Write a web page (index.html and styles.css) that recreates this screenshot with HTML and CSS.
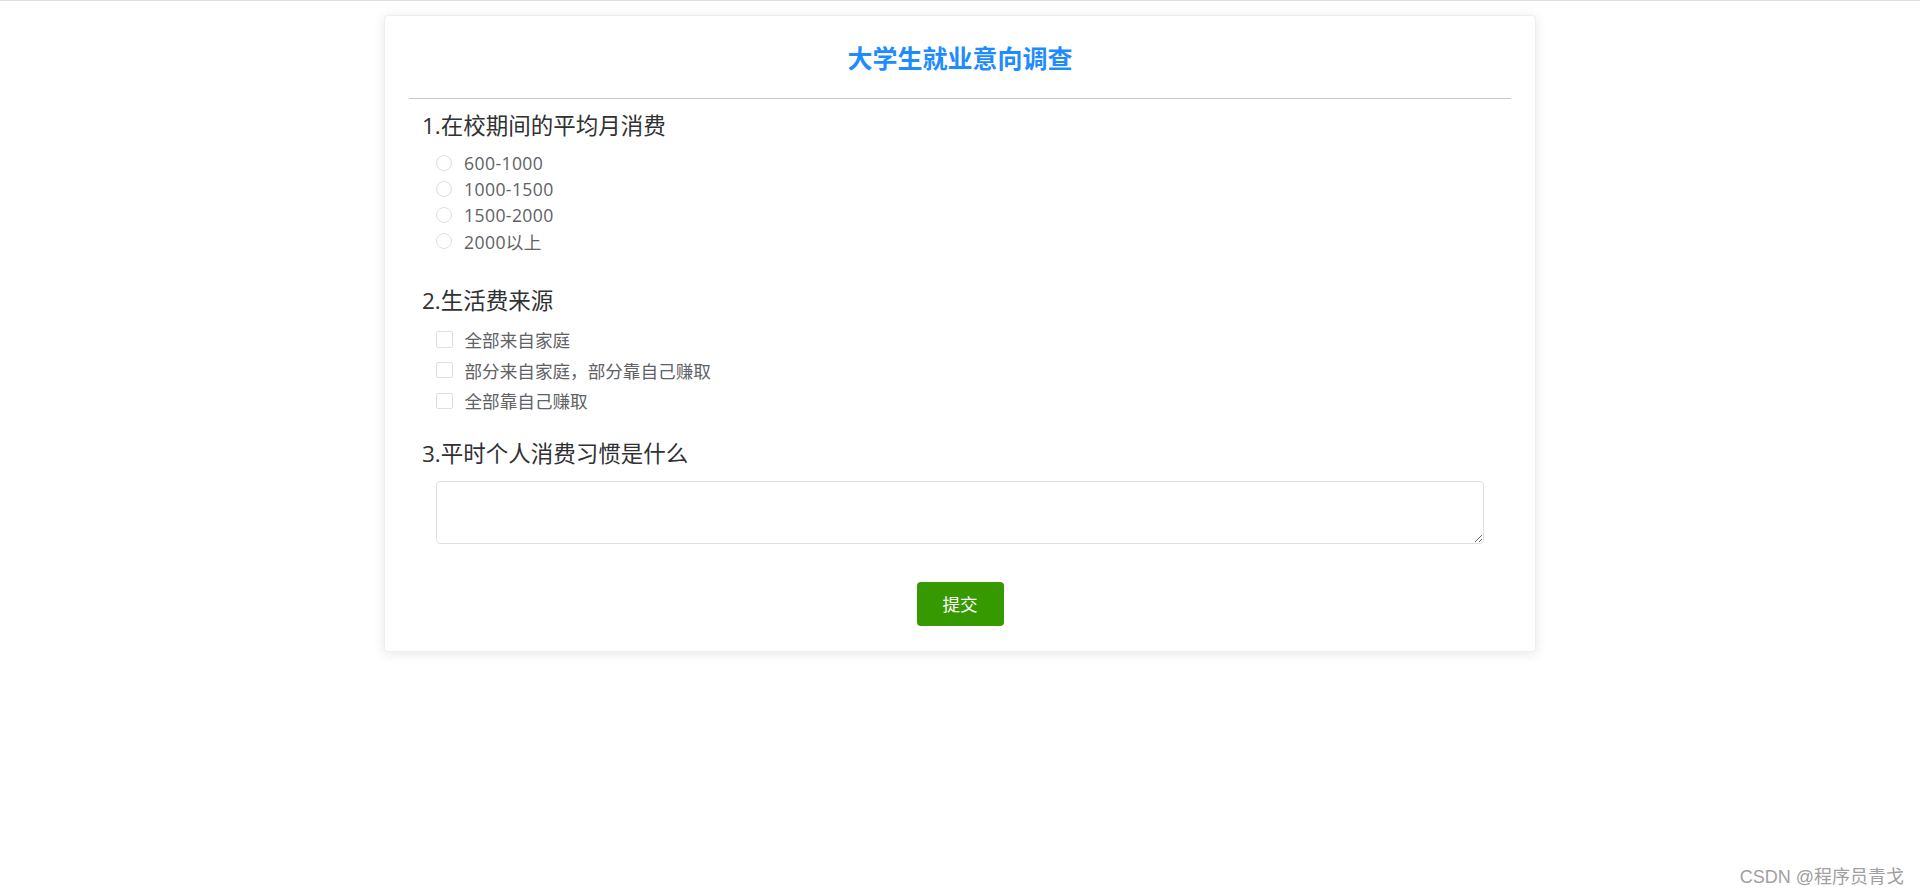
FILE: index.html
```html
<!DOCTYPE html>
<html lang="zh-CN">
<head>
<meta charset="utf-8">
<title>大学生就业意向调查</title>
<link rel="stylesheet" href="styles.css">
</head>
<body>
<div class="topline"></div>
<div class="card">
  <div class="card-header">
    <h2 class="title">大学生就业意向调查</h2>
  </div>
  <div class="question q1">
    <div class="q-title">1.在校期间的平均月消费</div>
    <div class="options">
      <label class="opt radio-opt"><input type="radio" name="q1" class="radio"><span class="opt-text">600-1000</span></label>
      <label class="opt radio-opt"><input type="radio" name="q1" class="radio"><span class="opt-text">1000-1500</span></label>
      <label class="opt radio-opt"><input type="radio" name="q1" class="radio"><span class="opt-text">1500-2000</span></label>
      <label class="opt radio-opt"><input type="radio" name="q1" class="radio"><span class="opt-text">2000以上</span></label>
    </div>
  </div>
  <div class="question q2">
    <div class="q-title">2.生活费来源</div>
    <div class="options">
      <label class="opt check-opt"><input type="checkbox" class="check"><span class="opt-text">全部来自家庭</span></label>
      <label class="opt check-opt"><input type="checkbox" class="check"><span class="opt-text">部分来自家庭，部分靠自己赚取</span></label>
      <label class="opt check-opt"><input type="checkbox" class="check"><span class="opt-text">全部靠自己赚取</span></label>
    </div>
  </div>
  <div class="question q3">
    <div class="q-title">3.平时个人消费习惯是什么</div>
    <div class="options">
      <textarea class="answer"></textarea>
    </div>
  </div>
  <div class="actions">
    <button class="submit" type="button">提交</button>
  </div>
</div>
<div class="watermark">CSDN @程序员青戈</div>
</body>
</html>
```

FILE: styles.css
```css
html, body {
  margin: 0;
  padding: 0;
  background: #ffffff;
}

body {
  font-family: "Open Sans", "Noto Sans CJK SC", sans-serif;
  color: #303133;
  height: 895px;
  position: relative;
  overflow: hidden;
}

.topline {
  height: 0;
  border-top: 1px solid #dedede;
}

.card {
  width: 60%;
  box-sizing: border-box;
  margin: 14px auto 0;
  padding: 23px 24px 25px;
  border: 1px solid #ebeef5;
  border-radius: 4px;
  background: #fff;
  box-shadow: 0 2px 12px 0 rgba(0, 0, 0, 0.1);
}

.card-header {
  padding-bottom: 23px;
  border-bottom: 1px solid #c8c8c8;
}

.title {
  margin: 0;
  text-align: center;
  font-family: "Noto Sans CJK SC", sans-serif;
  font-size: 25px;
  line-height: 36px;
  font-weight: 700;
  color: #1e8cff;
}

.question {
  padding-left: 13px;
}

.q1 {
  margin-top: 11.5px;
}

.q2 {
  margin-top: 32px;
}

.q3 {
  margin-top: 22.5px;
}

.q-title {
  font-size: 22.5px;
  line-height: 30px;
  color: #303133;
}

.options {
  display: flex;
  flex-direction: column;
  padding: 0 27px 0 14px;
}

.q1 .options {
  margin-top: 9.7px;
}

.q2 .options {
  margin-top: 7.8px;
}

.q3 .options {
  margin-top: 12px;
}

.opt {
  display: flex;
  align-items: center;
  gap: 12px;
  font-size: 17.6px;
  color: #606266;
}

.radio-opt {
  height: 26px;
}

.radio-opt .opt-text {
  letter-spacing: 0.4px;
}

.check-opt {
  height: 30.8px;
}

.radio,
.check {
  appearance: none;
  -webkit-appearance: none;
  margin: 0;
  width: 16px;
  height: 16px;
  flex: 0 0 16px;
  box-sizing: border-box;
  border: 1px solid #dcdfe6;
  background: #fff;
}

.radio {
  border-radius: 50%;
}

.check {
  width: 16.5px;
  height: 16.5px;
  flex-basis: 16.5px;
  border-radius: 2px;
}

.answer {
  display: block;
  width: 100%;
  height: 63px;
  box-sizing: border-box;
  margin: 0;
  border: 1px solid #dcdfe6;
  border-radius: 4px;
  resize: vertical;
  font-family: inherit;
  font-size: 16px;
  padding: 5px 10px;
  outline: none;
}

.actions {
  display: flex;
  justify-content: center;
  margin-top: 38px;
}

.submit {
  width: 87px;
  height: 44px;
  border: none;
  border-radius: 4px;
  background: #379900;
  color: #ffffff;
  font-family: "Noto Sans CJK SC", sans-serif;
  font-size: 17.6px;
  padding: 0;
  cursor: pointer;
}

.watermark {
  position: absolute;
  right: 16px;
  top: 865px;
  line-height: 24px;
  font-family: "Liberation Sans", "Noto Sans CJK SC", sans-serif;
  font-size: 18px;
  color: #a0a0a0;
}
```
